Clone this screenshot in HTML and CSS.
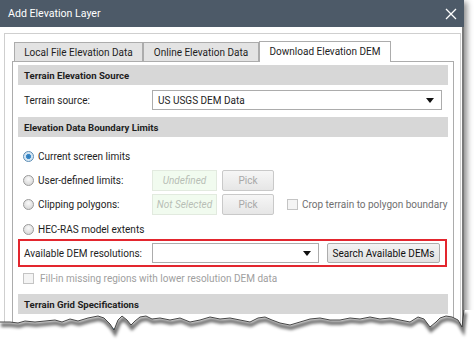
FILE: index.html
```html
<!DOCTYPE html>
<html>
<head>
<meta charset="utf-8">
<link rel="stylesheet" href="styles.css">
</head>
<body>
<div class="window">
  <div class="titlebar">
    <span class="title">Add Elevation Layer</span>
    <svg class="close" width="12" height="12" viewBox="0 0 12 12"><path d="M1 1 L11 11 M11 1 L1 11" stroke="#fff" stroke-width="1.3" fill="none"/></svg>
  </div>
  <div class="client">
    <div class="outer">
      <div class="tabs">
        <div class="tab t1">Local File Elevation Data</div>
        <div class="tab t2">Online Elevation Data</div>
        <div class="tab t3 active">Download Elevation DEM</div>
      </div>
      <div class="panel">
        <div class="section">Terrain Elevation Source</div>
        <div class="row row-source">
          <span class="lbl">Terrain source:</span>
          <div class="combo combo-wide"><span>US USGS DEM Data</span><span class="arrow"></span></div>
        </div>
        <div class="section s2">Elevation Data Boundary Limits</div>
        <div class="row radio-row r1"><span class="radio checked"></span><span class="rlbl">Current screen limits</span></div>
        <div class="row radio-row r2">
          <span class="radio"></span><span class="rlbl">User-defined limits:</span>
          <div class="field">Undefined</div>
          <div class="btn disabled">Pick</div>
        </div>
        <div class="row radio-row r3">
          <span class="radio"></span><span class="rlbl">Clipping polygons:</span>
          <div class="field">Not Selected</div>
          <div class="btn disabled">Pick</div>
          <span class="check"></span><span class="clbl">Crop terrain to polygon boundary</span>
        </div>
        <div class="row radio-row r4"><span class="radio"></span><span class="rlbl">HEC-RAS model extents</span></div>
        <div class="highlight">
          <span class="lbl">Available DEM resolutions:</span>
          <div class="combo combo-dem"><span></span><span class="arrow"></span></div>
          <div class="btn search">Search Available DEMs</div>
        </div>
        <div class="row fill-row"><span class="check"></span><span class="flbl">Fill-in missing regions with lower resolution DEM data</span></div>
        <div class="section s3">Terrain Grid Specifications</div>
        <div class="row tail"><span class="lbl">Computation point spacing:</span></div>
      </div>
    </div>
  </div>
</div>
<svg class="torn" width="474" height="42" viewBox="0 0 474 42">
  <defs>
    <clipPath id="below">
      <path d="M0 22 L10 22 L18 23 L25 21 L35 22 L45 21 L55 20 L62 22 L70 19 L78 21 L88 18 L98 16 L104 18 L110 24 L114 30 L118 20 L122 16 L127 20 L131 25 L135 21 L140 17 L146 16 L152 19 L160 18 L170 20 L180 18 L190 22 L200 20 L210 17 L220 19 L230 18 L240 20 L250 22 L258 18 L265 17 L272 20 L280 23 L290 25 L300 22 L310 19 L320 18 L330 20 L340 20 L350 18 L360 19 L370 17 L380 19 L390 18 L400 20 L410 22 L418 17 L424 19 L430 27 L436 22 L440 18 L446 16 L452 17 L458 20 L462 27 L464 10 L474 10 L474 42 L0 42 Z"/>
    </clipPath>
    <filter id="blur" x="-10%" y="-50%" width="120%" height="200%"><feGaussianBlur stdDeviation="1.6"/></filter>
  </defs>
  <path fill="#fff" d="M0 22 L10 22 L18 23 L25 21 L35 22 L45 21 L55 20 L62 22 L70 19 L78 21 L88 18 L98 16 L104 18 L110 24 L114 30 L118 20 L122 16 L127 20 L131 25 L135 21 L140 17 L146 16 L152 19 L160 18 L170 20 L180 18 L190 22 L200 20 L210 17 L220 19 L230 18 L240 20 L250 22 L258 18 L265 17 L272 20 L280 23 L290 25 L300 22 L310 19 L320 18 L330 20 L340 20 L350 18 L360 19 L370 17 L380 19 L390 18 L400 20 L410 22 L418 17 L424 19 L430 27 L436 22 L440 18 L446 16 L452 17 L458 20 L462 27 L464 10 L474 10 L474 42 L0 42 Z"/>
  <g clip-path="url(#below)">
    <path fill="none" stroke="#000" stroke-opacity="0.55" stroke-width="4" filter="url(#blur)" transform="translate(1 3)" d="M0 22 L10 22 L18 23 L25 21 L35 22 L45 21 L55 20 L62 22 L70 19 L78 21 L88 18 L98 16 L104 18 L110 24 L114 30 L118 20 L122 16 L127 20 L131 25 L135 21 L140 17 L146 16 L152 19 L160 18 L170 20 L180 18 L190 22 L200 20 L210 17 L220 19 L230 18 L240 20 L250 22 L258 18 L265 17 L272 20 L280 23 L290 25 L300 22 L310 19 L320 18 L330 20 L340 20 L350 18 L360 19 L370 17 L380 19 L390 18 L400 20 L410 22 L418 17 L424 19 L430 27 L436 22 L440 18 L446 16 L452 17 L458 20 L462 27 L464 10"/>
  </g>
  <path fill="none" stroke="#333" stroke-width="0.9" d="M0 22 L10 22 L18 23 L25 21 L35 22 L45 21 L55 20 L62 22 L70 19 L78 21 L88 18 L98 16 L104 18 L110 24 L114 30 L118 20 L122 16 L127 20 L131 25 L135 21 L140 17 L146 16 L152 19 L160 18 L170 20 L180 18 L190 22 L200 20 L210 17 L220 19 L230 18 L240 20 L250 22 L258 18 L265 17 L272 20 L280 23 L290 25 L300 22 L310 19 L320 18 L330 20 L340 20 L350 18 L360 19 L370 17 L380 19 L390 18 L400 20 L410 22 L418 17 L424 19 L430 27 L436 22 L440 18 L446 16 L452 17 L458 20 L462 27 L464 10"/>
</svg>
</body>
</html>
```

FILE: styles.css
```css
html, body {
  margin: 0;
  padding: 0;
  background: #fff;
  width: 474px;
  height: 342px;
  overflow: hidden;
}
body {
  position: relative;
  font-family: Roboto, "Noto Sans", sans-serif;
  font-size: 10px;
  color: #1e1e1e;
}
.window {
  width: 464px;
  height: 342px;
  overflow: hidden;
  box-shadow: 3px 2px 6px rgba(0, 0, 0, 0.45);
}
.titlebar {
  height: 27px;
  background: #4d5a68;
  color: #fff;
  display: flex;
  align-items: center;
  justify-content: space-between;
  padding: 0 7px 0 8px;
  font-size: 10.6px;
}
.close { display: block; }
.client {
  background: #fff;
  height: 315px;
  padding: 6px 1px 0 4px;
  border-right: 2px solid #7a7a7a;
  box-sizing: border-box;
}
.outer {
  border: 1px solid #cfcfcf;
  border-bottom: none;
  padding: 7px 6px 0 7px;
  height: 309px;
  box-sizing: border-box;
}
.tabs {
  display: flex;
  align-items: flex-end;
  padding-left: 2px;
  height: 21px;
  position: relative;
  z-index: 1;
}
.tab {
  box-sizing: border-box;
  height: 19px;
  margin-bottom: 1px;
  border: 1px solid #acacac;
  border-bottom: none;
  background: #e3e3e3;
  display: flex;
  align-items: center;
  justify-content: center;
  white-space: nowrap;
  flex: none;
}
.t1 { width: 129px; }
.t2 { width: 116px; }
.t3 { width: 132px; }
.tab.active {
  height: 21px;
  margin-bottom: 0;
  background: #fff;
  padding-bottom: 1px;
}
.panel {
  margin-top: -1px;
  border: 1px solid #acacac;
  border-bottom: none;
  padding-top: 3px;
  height: 280px;
  box-sizing: border-box;
  overflow: hidden;
}
.section {
  margin: 0 5px;
  height: 20px;
  background: #d7d7d7;
  font-weight: 700;
  font-size: 9.6px;
  display: flex;
  align-items: center;
  padding-left: 6px;
}
.s2 { margin-top: 7px; }
.s3 { margin-top: 7px; }
.row {
  display: flex;
  align-items: center;
  padding-left: 11px;
}
.row > *, .highlight > * { flex: none; }
.lbl {
  width: 128px;
  white-space: nowrap;
}
.row-source { margin-top: 5px; height: 20px; }
.combo {
  box-sizing: border-box;
  height: 20px;
  border: 1px solid #acacac;
  background: #fff;
  display: flex;
  align-items: center;
  justify-content: space-between;
  padding: 0 7px 0 5px;
}
.combo-wide { width: 290px; }
.combo-dem { width: 167px; }
.arrow {
  width: 0;
  height: 0;
  border-left: 4px solid transparent;
  border-right: 4px solid transparent;
  border-top: 5px solid #111;
}
.radio-row { padding-left: 10px; }
.radio {
  box-sizing: border-box;
  width: 11px;
  height: 11px;
  border-radius: 50%;
  border: 1px solid #9a9a9a;
  background: radial-gradient(circle at 50% 35%, #fafafa 0%, #dcdcdc 70%, #cfcfcf 100%);
}
.radio.checked {
  border-color: #5b8db5;
  background: radial-gradient(circle, #2b79b5 0%, #3f8ccc 35%, #cfe3f2 45%, #e8f1f8 100%);
}
.rlbl {
  width: 114px;
  margin-left: 4px;
  white-space: nowrap;
}
.r1 { margin-top: 9px; height: 20px; }
.r2 { margin-top: 4px; height: 21px; }
.r3 { margin-top: 3px; height: 21px; }
.r4 { margin-top: 4px; height: 20px; }
.field {
  box-sizing: border-box;
  width: 65px;
  height: 21px;
  background: #f1fbef;
  border: 1px solid #e2eadf;
  color: #b8beb6;
  font-style: italic;
  display: flex;
  align-items: center;
  justify-content: center;
  white-space: nowrap;
}
.btn {
  box-sizing: border-box;
  height: 21px;
  border: 1px solid #c9c9c9;
  border-radius: 2px;
  background: linear-gradient(#f6f6f6, #e6e6e6);
  display: flex;
  align-items: center;
  justify-content: center;
  white-space: nowrap;
}
.btn.disabled {
  width: 52px;
  margin-left: 5px;
  color: #a8a8a8;
}
.check {
  box-sizing: border-box;
  width: 11px;
  height: 11px;
  border: 1px solid #c4c4c4;
  background: #f4f4f4;
}
.r3 .check { margin-left: 13px; }
.clbl { margin-left: 4px; color: #6f6f6f; white-space: nowrap; }
.highlight {
  box-sizing: border-box;
  margin: 0 6px 0 5px;
  height: 28px;
  border: 2px solid #e3262e;
  display: flex;
  align-items: center;
  padding-left: 4px;
}
.search {
  width: 113px;
  height: 20px;
  margin-left: 8px;
  border-color: #adadad;
  background: linear-gradient(#f3f3f3, #e2e2e2);
  color: #111;
}
.fill-row { margin-top: 3px; height: 17px; padding-left: 10px; }
.flbl { margin-left: 6px; color: #a0a0a0; white-space: nowrap; }
.tail { margin-top: 6px; height: 20px; }
.torn {
  position: absolute;
  left: 0;
  top: 300px;
  display: block;
}
```
